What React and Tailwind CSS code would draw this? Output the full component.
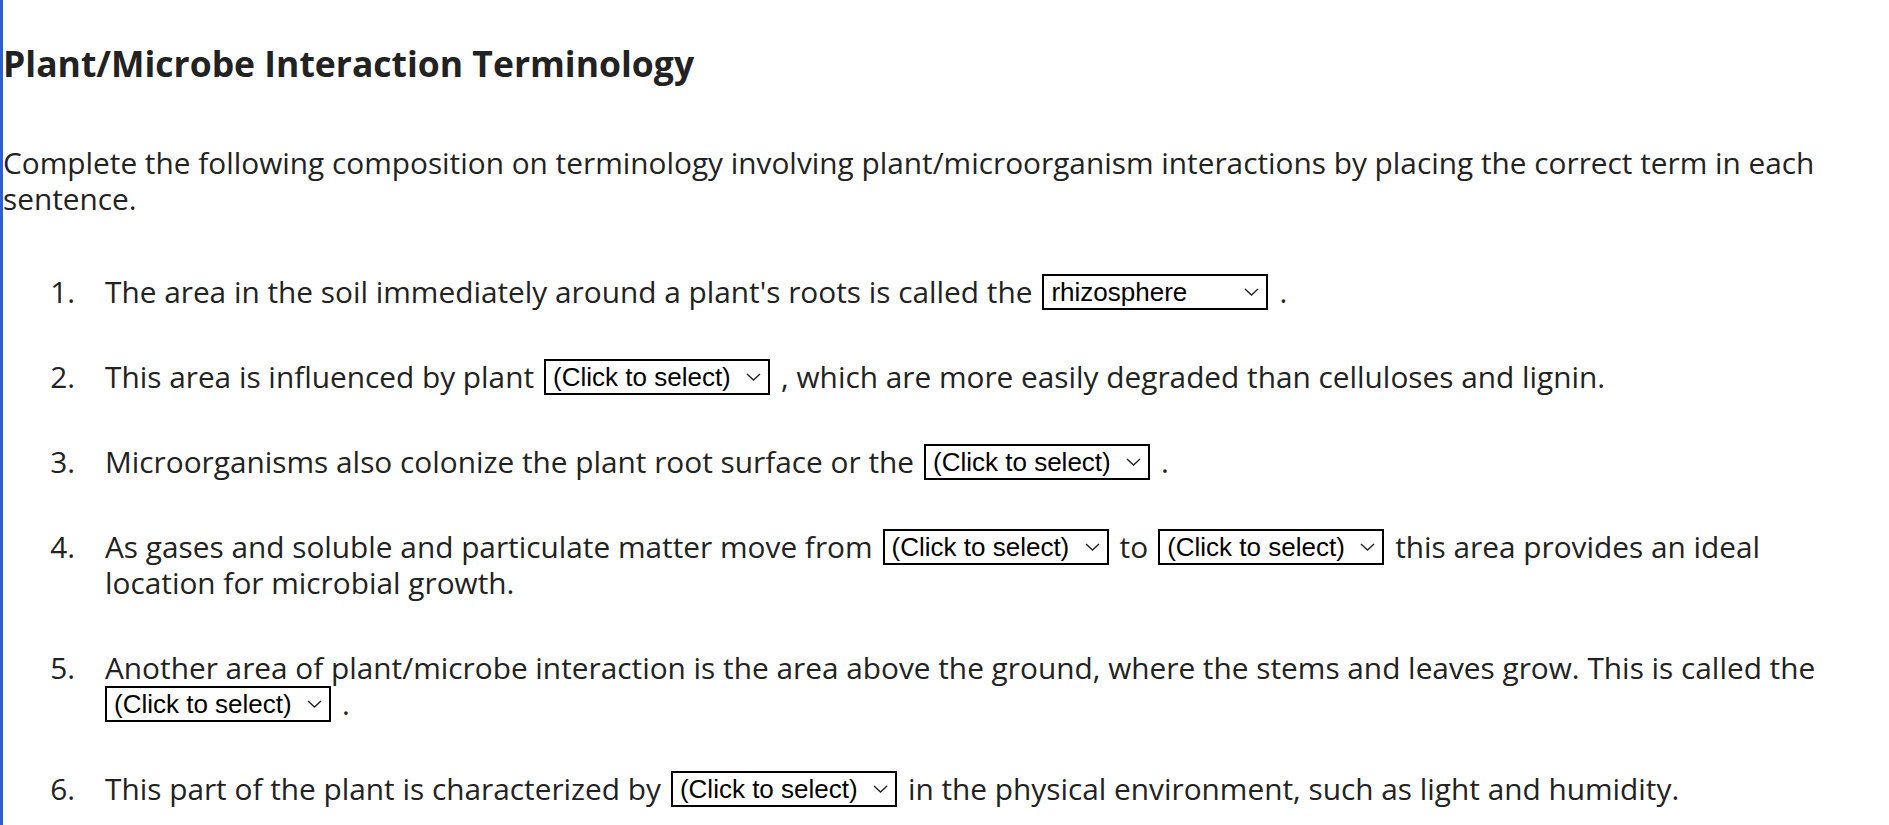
import React from "react";

const Pick = ({ value = "(Click to select)", first = false }) => (
  <span
    className={
      "inline-flex items-center justify-between align-top w-[226px] h-[36px] border-2 border-black bg-white pl-[7px] pr-[7px] mr-[11px] font-['Liberation_Sans',Arial,sans-serif] text-[26px] leading-none text-black " +
      (first ? "ml-0" : "ml-[10px]")
    }
  >
    <span>{value}</span>
    <svg width="15" height="8" viewBox="0 0 15 8" fill="none" stroke="#222" strokeWidth="1.4">
      <polyline points="1,1 7.5,7 14,1" />
    </svg>
  </span>
);

const Item = ({ n, children }) => (
  <li className="flex mb-[49px]">
    <span className="w-[72px] shrink-0 text-right">{n}.</span>
    <div className="pl-[30px]">{children}</div>
  </li>
);

const App = () => {
  return (
    <div className="min-h-screen bg-white border-l-[3px] border-[#2c5fd1] text-[#222] font-['Open_Sans','Noto_Sans',sans-serif] text-[29.8px] leading-[36px] pr-[30px]">
      <h2 className="pt-[43px] text-[35.5px] leading-[40px] font-bold">Plant/Microbe Interaction Terminology</h2>

      <p className="mt-[62px]">
        Complete the following composition on terminology involving plant/microorganism interactions by placing the correct term in each sentence.
      </p>

      <ol className="mt-[57px]">
        <Item n={1}>
          The area in the soil immediately around a plant's roots is called the<Pick value="rhizosphere" />.
        </Item>
        <Item n={2}>
          This area is influenced by plant<Pick />, which are more easily degraded than celluloses and lignin.
        </Item>
        <Item n={3}>
          Microorganisms also colonize the plant root surface or the<Pick />.
        </Item>
        <Item n={4}>
          As gases and soluble and particulate matter move from<Pick />to<Pick />this area provides an ideal location for microbial growth.
        </Item>
        <Item n={5}>
          Another area of plant/microbe interaction is the area above the ground, where the stems and leaves grow. This is called the <Pick first />.
        </Item>
        <Item n={6}>
          This part of the plant is characterized by<Pick />in the physical environment, such as light and humidity.
        </Item>
      </ol>
    </div>
  );
};

export default App;
